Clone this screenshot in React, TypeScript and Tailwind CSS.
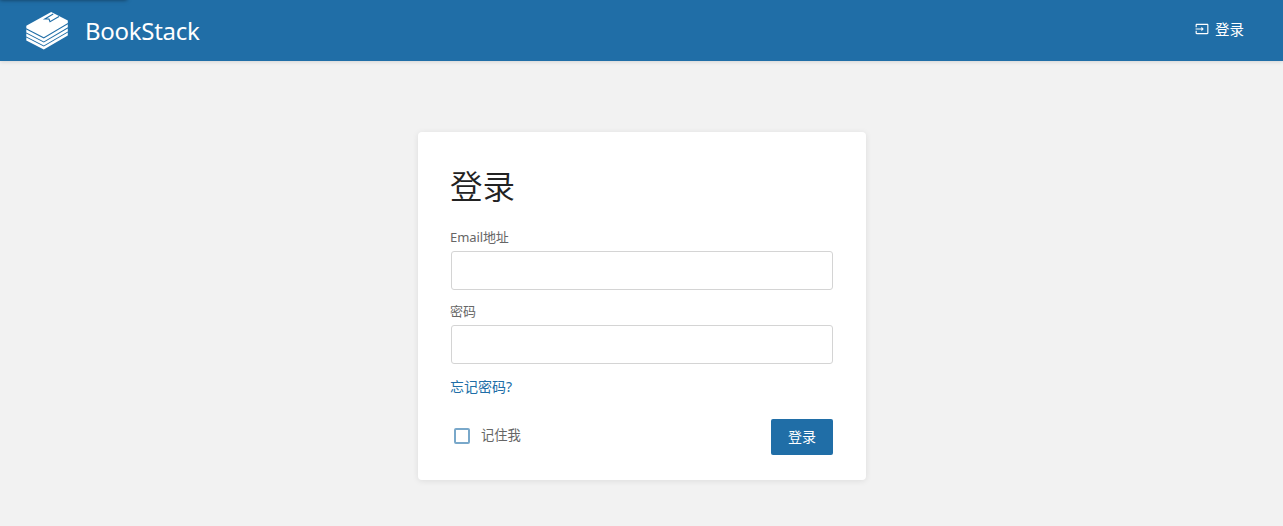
import { useState } from 'react'

interface FieldProps {
  id: string
  label: string
  type: string
}

function BookStackLogo() {
  return (
    <svg width="42" height="38" viewBox="0 0 42 38" fill="#fff" aria-hidden="true">
      <path d="M25.2 0 41.8 8.4v2.7L17.8 25.2 0.3 16.2v-2.4z" />
      <path d="M0.3 17.4 17.8 26.4 41.8 12.3v3L17.8 29.4 0.3 20.4z" />
      <path d="M0.3 21.5 17.8 30.5 41.8 16.4v3L17.8 33.5 0.3 24.5z" />
      <path d="M0.3 25.6 17.8 34.6 41.8 20.5v3L17.8 37.6 0.3 28.6z" />
      <path d="M27.2 2 18.8 7h4.2l1 2.8 9-5.2" fill="none" stroke="#206ea7" strokeWidth="1.1" />
    </svg>
  )
}

function LoginIcon() {
  return (
    <svg width="14" height="14" viewBox="0 0 24 24" fill="currentColor" aria-hidden="true">
      <path d="M21 3.01H3c-1.1 0-2 .9-2 2V9h2V4.99h18v14.03H3V15H1v4.01c0 1.1.9 1.98 2 1.98h18c1.1 0 2-.88 2-1.98v-14c0-1.11-.9-2-2-2zM11 16l4-4-4-4v3H1v2h10v3z" />
    </svg>
  )
}

function Field({ id, label, type }: FieldProps) {
  return (
    <div className="flex flex-col">
      <label htmlFor={id} className="h-5 text-[13px] leading-5 tracking-[-0.1px] text-[#666]">{label}</label>
      <input
        id={id}
        type={type}
        className="mt-1 ml-px h-[39px] w-[382px] rounded-[3px] border border-[#d4d4d4] bg-white px-2 text-sm outline-none"
      />
    </div>
  )
}

export default function App() {
  const [remember, setRemember] = useState(false)

  return (
    <div className="relative min-h-screen overflow-hidden bg-[#f2f2f2] font-['Noto_Sans','Noto_Sans_CJK_SC',sans-serif]">
      {/* shadow of the off-screen skip link */}
      <div className="absolute -top-10 left-0 h-10 w-[127px] shadow-[0_0_4px_rgba(0,0,0,0.5)]" />
      <header className="flex h-[61px] items-center justify-between bg-[#206ea7] pr-[39px] pl-[26px] text-white shadow-[0_1px_4px_rgba(0,0,0,0.12)]">
        <a href="#" className="flex items-center">
          <BookStackLogo />
          <span className="ml-[17px] text-2xl tracking-[-0.3px]">BookStack</span>
        </a>
        <a href="#" className="mb-[3px] flex items-center gap-[6px] text-[14.5px] leading-5">
          <LoginIcon />
          <span>登录</span>
        </a>
      </header>

      <div className="flex justify-center pt-[71px] pl-px">
        <main className="h-[348px] w-[448px] rounded-[4px] bg-white px-8 pt-8 shadow-[0_1px_6px_rgba(0,0,0,0.09)]">
          <h1 className="h-[47px] text-[32.5px] leading-[45px] font-[350] text-[#222]">登录</h1>
          <form className="mt-4" onSubmit={(e) => e.preventDefault()}>
            <div className="flex flex-col gap-[11px]">
              <Field id="email" label="Email地址" type="email" />
              <Field id="password" label="密码" type="password" />
            </div>
            <a href="#" className="mt-[13px] block h-5 text-[14px] leading-5 text-[#206ea7]">忘记密码?</a>
            <div className="mt-[22px] flex items-center justify-between pr-px">
              <label className="mb-0.5 flex items-center pl-1 text-[13.3px] text-[#666]">
                <input
                  type="checkbox"
                  checked={remember}
                  onChange={(e) => setRemember(e.target.checked)}
                  className="h-4 w-4 appearance-none rounded-[2px] border-2 border-[#79a8ca] bg-white checked:bg-[#206ea7]"
                />
                <span className="ml-[11px]">记住我</span>
              </label>
              <button className="h-9 w-[62px] rounded-[2px] bg-[#206ea7] text-sm text-white">登录</button>
            </div>
          </form>
        </main>
      </div>
    </div>
  )
}
